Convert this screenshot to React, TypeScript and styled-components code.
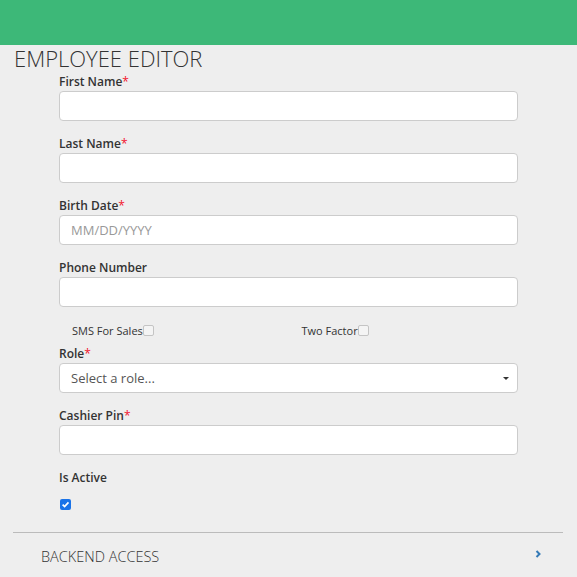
import React from "react";
import styled, { createGlobalStyle } from "styled-components";

const Global = createGlobalStyle`
  html, body { margin: 0; padding: 0; background: #eeeeee; }
  body { font-family: "Open Sans", "Liberation Sans", sans-serif; color: #333; }
  * { box-sizing: border-box; }
`;

const Page = styled.div`
  width: 577px;
  height: 577px;
  overflow: hidden;
  background: #eeeeee;
`;

const TopBar = styled.div`
  height: 45px;
  background: #3db878;
`;

const Title = styled.h1`
  margin: 0;
  padding: 0 0 0 14px;
  font-size: 22px;
  font-weight: 300;
  line-height: 26px;
  color: #333;
`;

const Form = styled.div`
  padding: 0 59px;
  width: 577px;
`;

const Field = styled.div`
  display: flex;
  flex-direction: column;
  margin-bottom: 12px;
`;

const Label = styled.label`
  display: block;
  height: 20px;
  padding-top: 1px;
  font-size: 12px;
  font-weight: 600;
  line-height: 20px;
  color: #333;
`;

const Req = styled.span`
  color: #f2132c;
  font-weight: 400;
`;

const Input = styled.input`
  height: 30px;
  width: 100%;
  border: 1px solid #cccccc;
  border-radius: 4px;
  background: #fff;
  padding: 0 11px;
  font-family: inherit;
  font-size: 13px;
  color: #555;
  outline: none;
  &::placeholder { color: #999; }
`;

const Select = styled.div`
  height: 30px;
  border: 1px solid #cccccc;
  border-radius: 4px;
  background: #fff;
  padding: 0 11px;
  display: flex;
  align-items: center;
  justify-content: space-between;
  font-size: 13px;
  color: #555;
`;

const Caret = styled.span`
  width: 0;
  height: 0;
  border-left: 3px solid transparent;
  border-right: 3px solid transparent;
  border-top: 3px solid #333;
  margin-right: -3px;
`;

const CheckRow = styled.div`
  display: grid;
  grid-template-columns: 1fr 1fr;
  margin: 10px 0 0;
  height: 26px;
  align-items: center;
`;

const CheckItem = styled.label`
  display: flex;
  align-items: center;
  padding-left: 13px;
  font-size: 11px;
  font-weight: 400;
  color: #333;
`;

const Box = styled.span`
  display: inline-block;
  width: 11px;
  height: 11px;
  border: 1px solid #c4c4c4;
  border-radius: 2px;
  background: #f4f4f4;
`;

const Checked = styled.span`
  display: flex;
  align-items: center;
  justify-content: center;
  width: 11px;
  height: 11px;
  border-radius: 2px;
  background: #1a73e8;
  margin: 12px 0 0 1px;
`;

const Divider = styled.div`
  margin: 22px 14px 0 13px;
  border-top: 1px solid #bbbbbb;
`;

const Section = styled.div`
  display: flex;
  align-items: center;
  justify-content: space-between;
  padding: 0 36px 0 41px;
  height: 46px;
`;

const SectionTitle = styled.span`
  font-size: 14.5px;
  font-weight: 300;
  color: #333;
`;

const Chevron = styled.svg`
  margin-top: -4px;
`;

function Text({ label, req, placeholder }: { label: string; req?: boolean; placeholder?: string }) {
  return (
    <Field>
      <Label>
        {label}
        {req && <Req>*</Req>}
      </Label>
      <Input placeholder={placeholder} />
    </Field>
  );
}

export default function App() {
  return (
    <Page>
      <Global />
      <TopBar />
      <Title>EMPLOYEE EDITOR</Title>
      <Form>
        <Text label="First Name" req />
        <Text label="Last Name" req />
        <Text label="Birth Date" req placeholder="MM/DD/YYYY" />
        <Field style={{ marginBottom: 0 }}>
          <Label>Phone Number</Label>
          <Input />
        </Field>
        <CheckRow>
          <CheckItem>
            SMS For Sales
            <Box />
          </CheckItem>
          <CheckItem>
            Two Factor
            <Box />
          </CheckItem>
        </CheckRow>
        <Field>
          <Label>
            Role<Req>*</Req>
          </Label>
          <Select>
            Select a role...
            <Caret />
          </Select>
        </Field>
        <Text label="Cashier Pin" req />
        <Field>
          <Label>Is Active</Label>
          <Checked>
            <svg width="9" height="9" viewBox="0 0 10 10">
              <path d="M1.8 5.2 L4 7.4 L8.3 2.6" stroke="#fff" strokeWidth="1.8" fill="none" />
            </svg>
          </Checked>
        </Field>
      </Form>
      <Divider />
      <Section>
        <SectionTitle>BACKEND ACCESS</SectionTitle>
        <Chevron width="6" height="8" viewBox="0 0 6 8">
          <path d="M1.5 1 L4.5 4 L1.5 7" stroke="#337ab7" strokeWidth="2" fill="none" />
        </Chevron>
      </Section>
    </Page>
  );
}
